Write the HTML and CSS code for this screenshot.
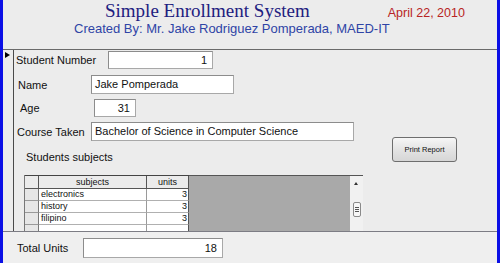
FILE: index.html
```html
<!DOCTYPE html>
<html>
<head>
<meta charset="utf-8">
<link rel="stylesheet" href="styles.css">
</head>
<body>
<div class="window">
  <div class="edge"></div>
  <div class="form">
    <div class="header">
      <div class="title-row">
        <span class="title">Simple Enrollment System</span>
        <span class="date">April 22, 2010</span>
      </div>
      <div class="credit">Created By: Mr. Jake Rodriguez Pomperada, MAED-IT</div>
    </div>
    <div class="detail">
      <div class="selector"><span class="pointer"></span></div>
      <div class="detail-body">
        <div class="top-area">
          <div class="fields">
            <div class="row r1"><span class="lbl l1">Student Number</span><span class="box b1 num">1</span></div>
            <div class="row r2"><span class="lbl l2">Name</span><span class="box b2">Jake Pomperada</span></div>
            <div class="row r3"><span class="lbl l3">Age</span><span class="box b3 num">31</span></div>
            <div class="row r4"><span class="lbl l4">Course Taken</span><span class="box b4">Bachelor of Science in Computer Science</span></div>
            <div class="sub-lbl">Students subjects</div>
          </div>
          <div class="btn-col"><button class="btn">Print Report</button></div>
        </div>
        <div class="grid">
          <div class="table">
            <div class="c hsel"></div><div class="c hd">subjects</div><div class="c hd">units</div>
            <div class="c rsel"></div><div class="c txt">electronics</div><div class="c val">3</div>
            <div class="c rsel"></div><div class="c txt">history</div><div class="c val">3</div>
            <div class="c rsel"></div><div class="c txt">filipino</div><div class="c val">3</div>
            <div class="c rsel"></div><div class="c txt"></div><div class="c val"></div>
          </div>
          <div class="filler"></div>
          <div class="scroll">
            <span class="up"></span>
            <span class="thumb"><i></i><i></i><i></i></span>
          </div>
        </div>
      </div>
    </div>
    <div class="footer">
      <span class="lbl">Total Units</span><span class="box tot num">18</span>
    </div>
  </div>
  <div class="edge"></div>
</div>
</body>
</html>
```
FILE: styles.css
```css
html, body {
  margin: 0;
  padding: 0;
}
body {
  width: 500px;
  height: 263px;
  overflow: hidden;
  font-family: "Liberation Sans", Arial, sans-serif;
  background: #ececec;
}
.window {
  display: flex;
  height: 263px;
}
.edge {
  width: 3px;
  background: #0b10e6;
  flex: none;
}
.form {
  flex: 1;
  display: flex;
  flex-direction: column;
  background: #ececec;
}
.header {
  height: 49px;
  border-bottom: 1px solid #6a6a6a;
  box-sizing: content-box;
}
.title-row {
  display: flex;
  align-items: baseline;
  padding-top: 1px;
  height: 20px;
}
.title {
  font-family: "Liberation Serif", "Times New Roman", serif;
  font-size: 19px;
  line-height: 19px;
  color: #1e2080;
  margin-left: 102px;
}
.date {
  font-size: 12.5px;
  color: #b82424;
  margin-left: 78px;
}
.credit {
  margin-top: 1px;
  margin-left: 71px;
  font-size: 13px;
  line-height: 14px;
  color: #2f44a6;
}
.detail {
  height: 181px;
  display: flex;
  border-bottom: 1px solid #7c7c84;
}
.selector {
  width: 10px;
  border-right: 1px solid #4a4a4a;
  flex: none;
}
.pointer {
  display: block;
  width: 0;
  height: 0;
  margin: 2px 0 0 2px;
  border-left: 5px solid #000;
  border-top: 3px solid transparent;
  border-bottom: 3px solid transparent;
}
.detail-body {
  flex: 1;
  display: flex;
  flex-direction: column;
}
.top-area {
  display: flex;
  height: 125px;
}
.fields {
  width: 378px;
}
.row {
  display: flex;
  align-items: center;
}
.lbl {
  font-size: 11px;
  color: #111;
}
.box {
  display: block;
  box-sizing: border-box;
  background: #fff;
  border: 1px solid #a8a8a8;
  border-top-color: #8c8c8c;
  border-left-color: #8c8c8c;
  font-size: 11px;
  color: #111;
  padding: 0 3px;
  line-height: 16px;
}
.num {
  text-align: right;
  padding-right: 5px;
}
.r1 { margin-top: 1px; }
.l1 { margin-left: 2px; width: 92px; }
.b1 { width: 105px; height: 18px; }
.r2 { margin-top: 6px; }
.l2 { margin-left: 4px; width: 73px; }
.b2 { width: 143px; height: 19px; line-height: 17px; }
.r3 { margin-top: 5px; }
.l3 { margin-left: 6px; width: 74px; }
.b3 { width: 42px; height: 18px; }
.r4 { margin-top: 5px; }
.l4 { margin-left: 3px; width: 74px; }
.b4 { width: 263px; height: 19px; line-height: 17px; }
.sub-lbl {
  font-size: 11px;
  color: #111;
  margin-top: 10px;
  margin-left: 12px;
}
.btn-col {
  padding-top: 87px;
}
.btn {
  display: block;
  width: 65px;
  height: 25px;
  padding: 0;
  margin-left: 0;
  border: 1px solid #6e6e6e;
  border-radius: 3px;
  background: linear-gradient(#f6f6f6, #e2e2e2 55%, #d6d6d6);
  font-family: "Liberation Sans", Arial, sans-serif;
  font-size: 7.5px;
  color: #111;
}
.grid {
  margin-left: 10px;
  width: 339px;
  height: 56px;
  display: flex;
  overflow: hidden;
  border-left: 1px solid #777;
  box-sizing: border-box;
}
.table {
  display: grid;
  grid-template-columns: 14px 108px 42px;
  grid-template-rows: 13px 12px 12px 12px 12px;
  flex: none;
  border-top: 1px solid #444;
  box-sizing: border-box;
}
.c {
  box-sizing: border-box;
  border-right: 1px solid #9a9a9a;
  border-bottom: 1px solid #b0b0b0;
  font-size: 9px;
  line-height: 11px;
  color: #111;
  overflow: hidden;
  white-space: nowrap;
}
.hsel, .hd {
  background: #ebebeb;
  border-bottom: 1px solid #555;
  border-right: 1px solid #555;
}
.hd {
  text-align: center;
  line-height: 12px;
}
.rsel {
  background: #e6e6e6;
  border-right: 1px solid #777;
  border-bottom: 1px solid #999;
}
.txt {
  background: #fff;
  padding-left: 2px;
}
.val {
  background: #fff;
  text-align: right;
  padding-right: 1px;
  border-right: 1px solid #555;
}
.filler {
  flex: 1;
  background: #a9a9a9;
  border-top: 1px solid #555;
}
.scroll {
  width: 13px;
  flex: none;
  background: #f1f1f1;
  border-top: 1px solid #555;
  position: relative;
}
.up {
  position: absolute;
  left: 4px;
  top: 6px;
  width: 0;
  height: 0;
  border-left: 2.5px solid transparent;
  border-right: 2.5px solid transparent;
  border-bottom: 3px solid #333;
}
.thumb {
  position: absolute;
  left: 3px;
  top: 26px;
  width: 8px;
  height: 15px;
  box-sizing: border-box;
  border: 1px solid #8a8a8a;
  border-radius: 2px;
  background: #f7f7f7;
  display: flex;
  flex-direction: column;
  justify-content: center;
  gap: 1px;
  padding-left: 1px;
}
.thumb i {
  display: block;
  width: 4px;
  height: 1px;
  background: #555;
}
.footer {
  flex: 1;
  display: flex;
  align-items: center;
  background: #efefef;
  padding-left: 14px;
}
.footer .lbl {
  width: 66px;
}
.tot {
  width: 140px;
  height: 20px;
  line-height: 18px;
  margin-top: 1px;
}
```
